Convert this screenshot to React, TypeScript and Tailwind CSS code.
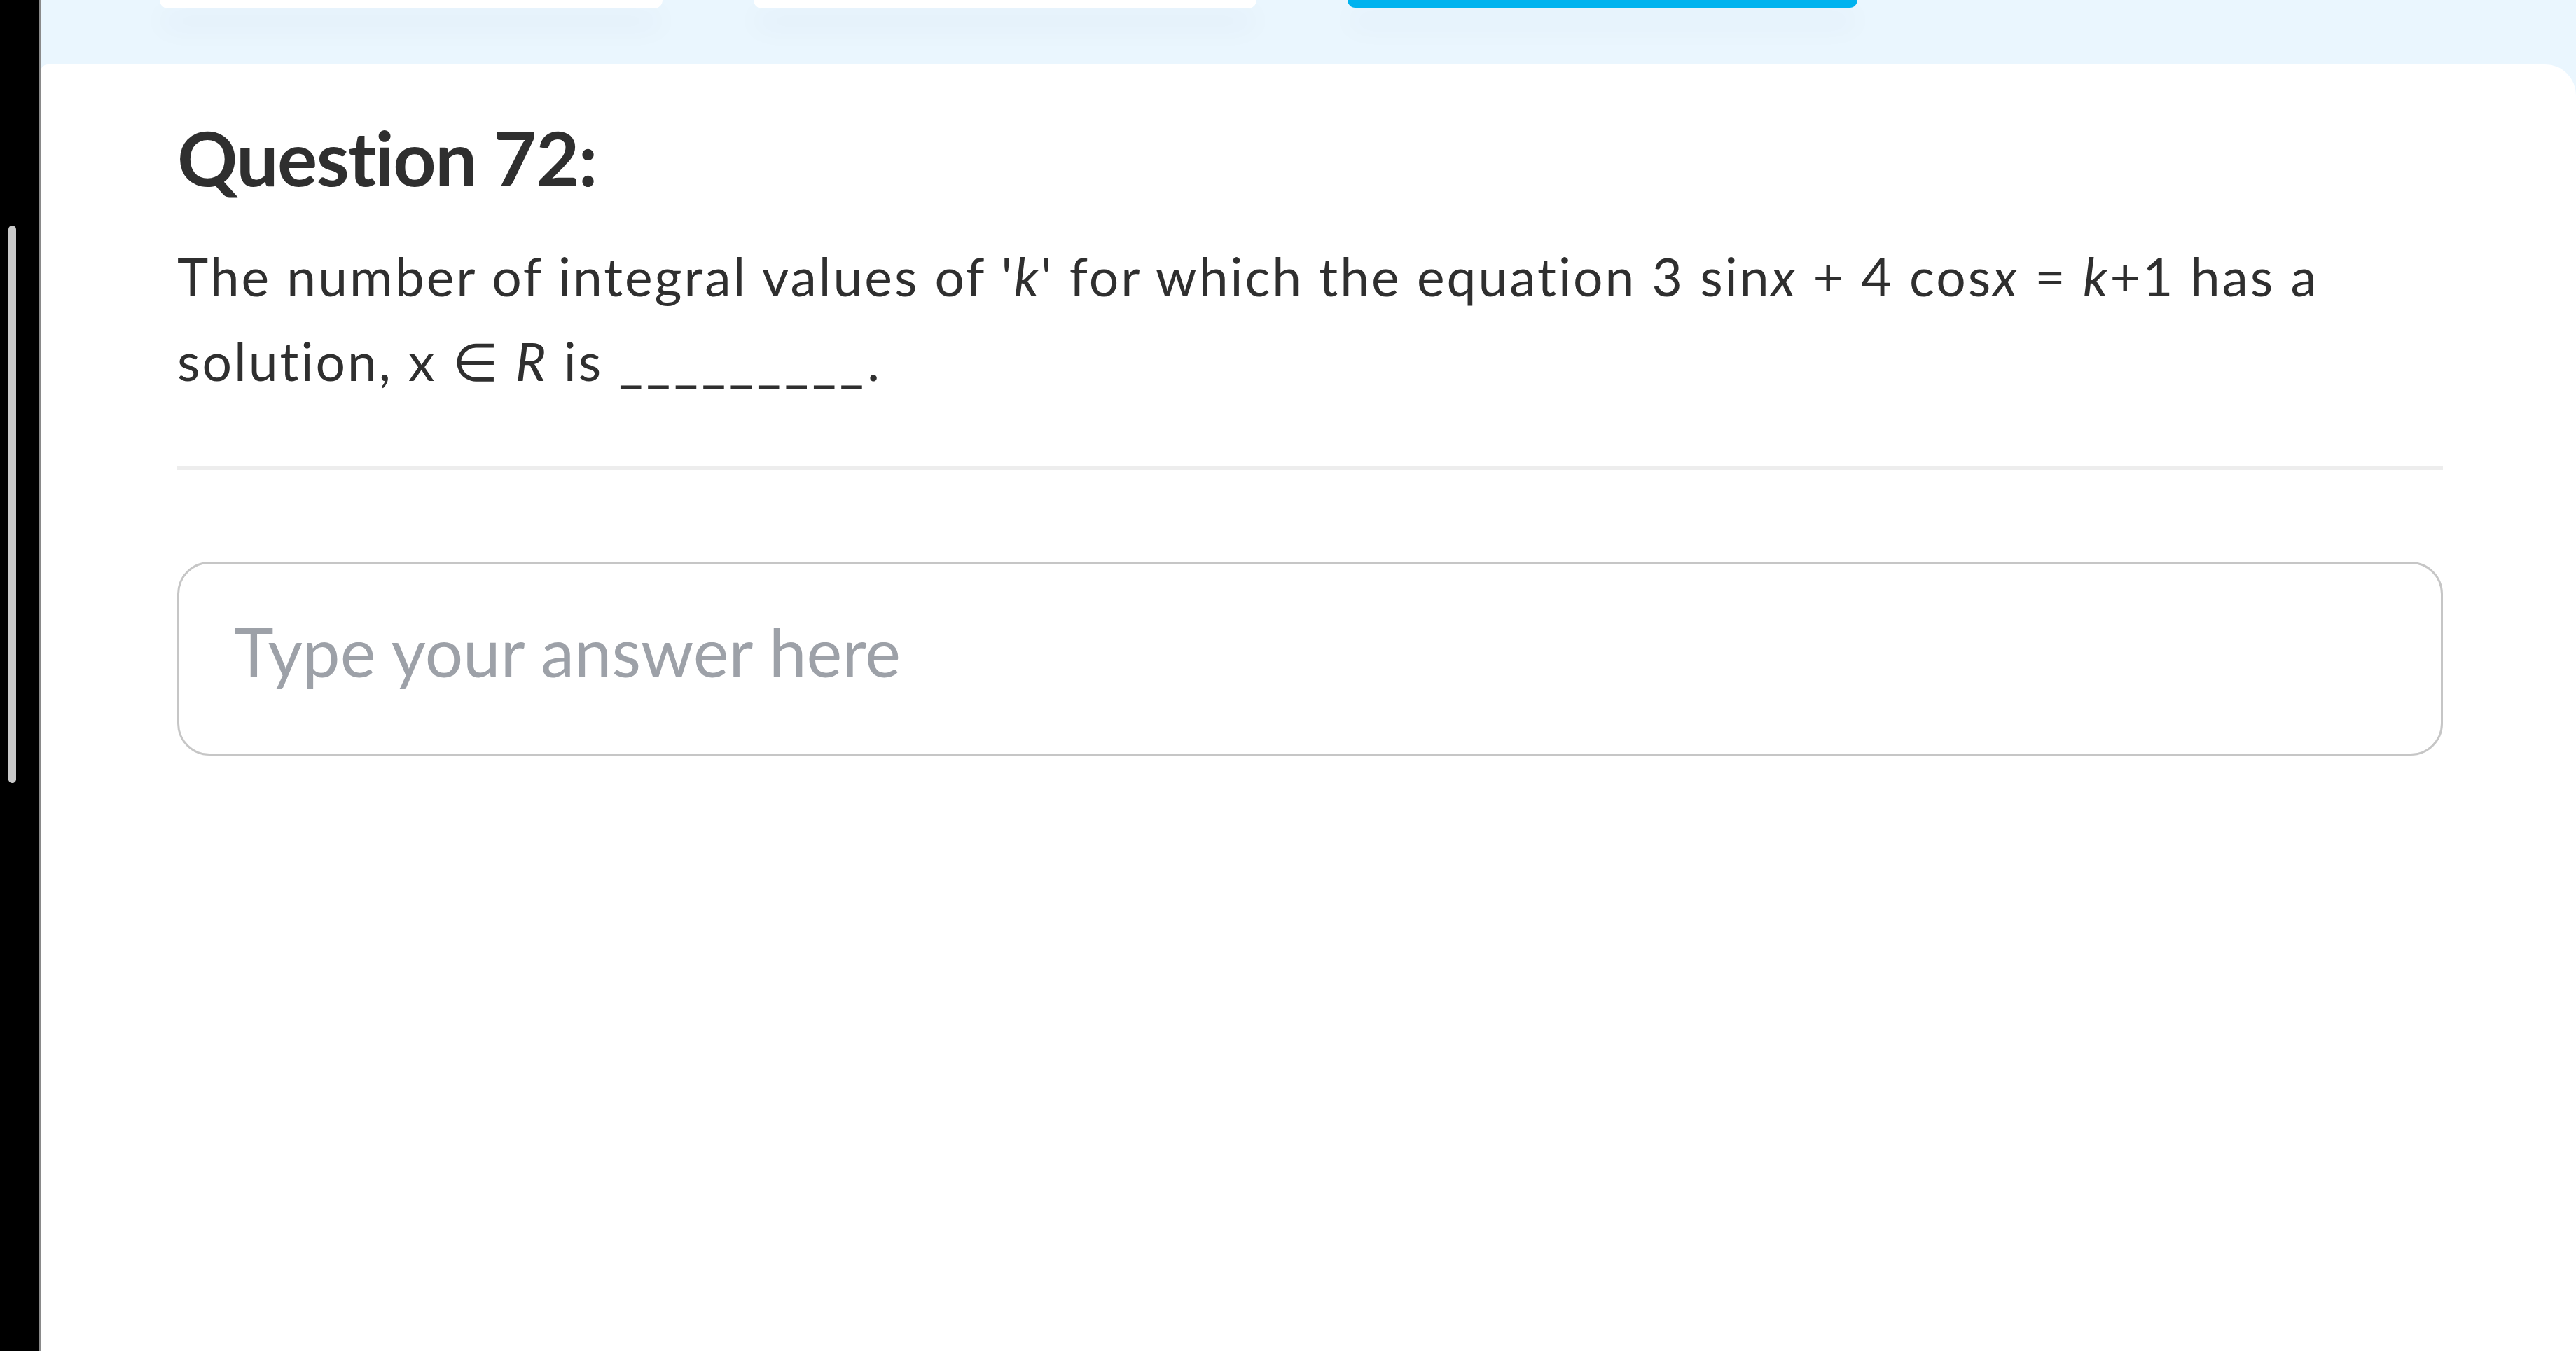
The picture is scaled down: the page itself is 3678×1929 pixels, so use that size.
import React from "react"

const tabs = [
  { active: false },
  { active: false },
  { active: true },
]

export default function App() {
  return (
    <div className="flex h-[1929px] w-[3678px] overflow-hidden bg-black font-['Lato',sans-serif] [font-variant-ligatures:none]">
      {/* Screen edge with scroll indicator */}
      <div className="w-[56px] shrink-0 bg-black pl-[12px] pt-[322px]">
        <div className="h-[796px] w-[11px] rounded-full bg-[#c9c9c9]" />
      </div>
      <div className="w-[2px] shrink-0 bg-[#8a8a8a]" />

      <div className="flex flex-1 flex-col bg-[#eaf6fe]">
        {/* Question palette tabs (scrolled off the top) */}
        <div className="flex h-[92px] shrink-0 gap-[130px] pl-[170px]">
          {tabs.map((t, i) => (
            <div
              key={i}
              className={
                t.active
                  ? "h-[11px] w-[728px] rounded-b-[28px] bg-[#00b3ef] shadow-[0_24px_40px_rgba(0,60,100,0.07)]"
                  : "h-[12px] w-[718px] rounded-b-[28px] bg-white shadow-[0_24px_40px_rgba(0,60,100,0.07)]"
              }
            />
          ))}
        </div>

        {/* Question card */}
        <div className="flex-1 rounded-tl-[10px] rounded-tr-[44px] bg-white pl-[195px] pr-[190px] pt-[69px]">
          <h2 className="text-[107px] font-bold leading-[1.2] tracking-[-1.5px] text-[#2f2f2f]">Question 72:</h2>

          <p className="mt-[45px] text-[75px] leading-[121px] tracking-[3px] text-[#2f2f2f]">
            The number of integral values of '<i>k</i>' for which the equation 3 sin<i>x</i> + 4 cos
            <i>x</i> = <i>k</i>+1 has a
            <br />
            solution, x ∈ <i>R</i> is{" "}
            <span className="tracking-[5px]">_________</span>.
          </p>

          <div className="mt-[90px] h-[5px] bg-[#ededed]" />

          <input
            type="text"
            placeholder="Type your answer here"
            className="mt-[131px] box-border h-[277px] w-full rounded-[46px] border-[3px] border-[#c6c6c6] bg-white pb-[22px] pl-[78px] pt-0 text-[96px] text-[#333333] outline-none placeholder:text-[#9da1a8]"
          />
        </div>
      </div>
    </div>
  )
}
